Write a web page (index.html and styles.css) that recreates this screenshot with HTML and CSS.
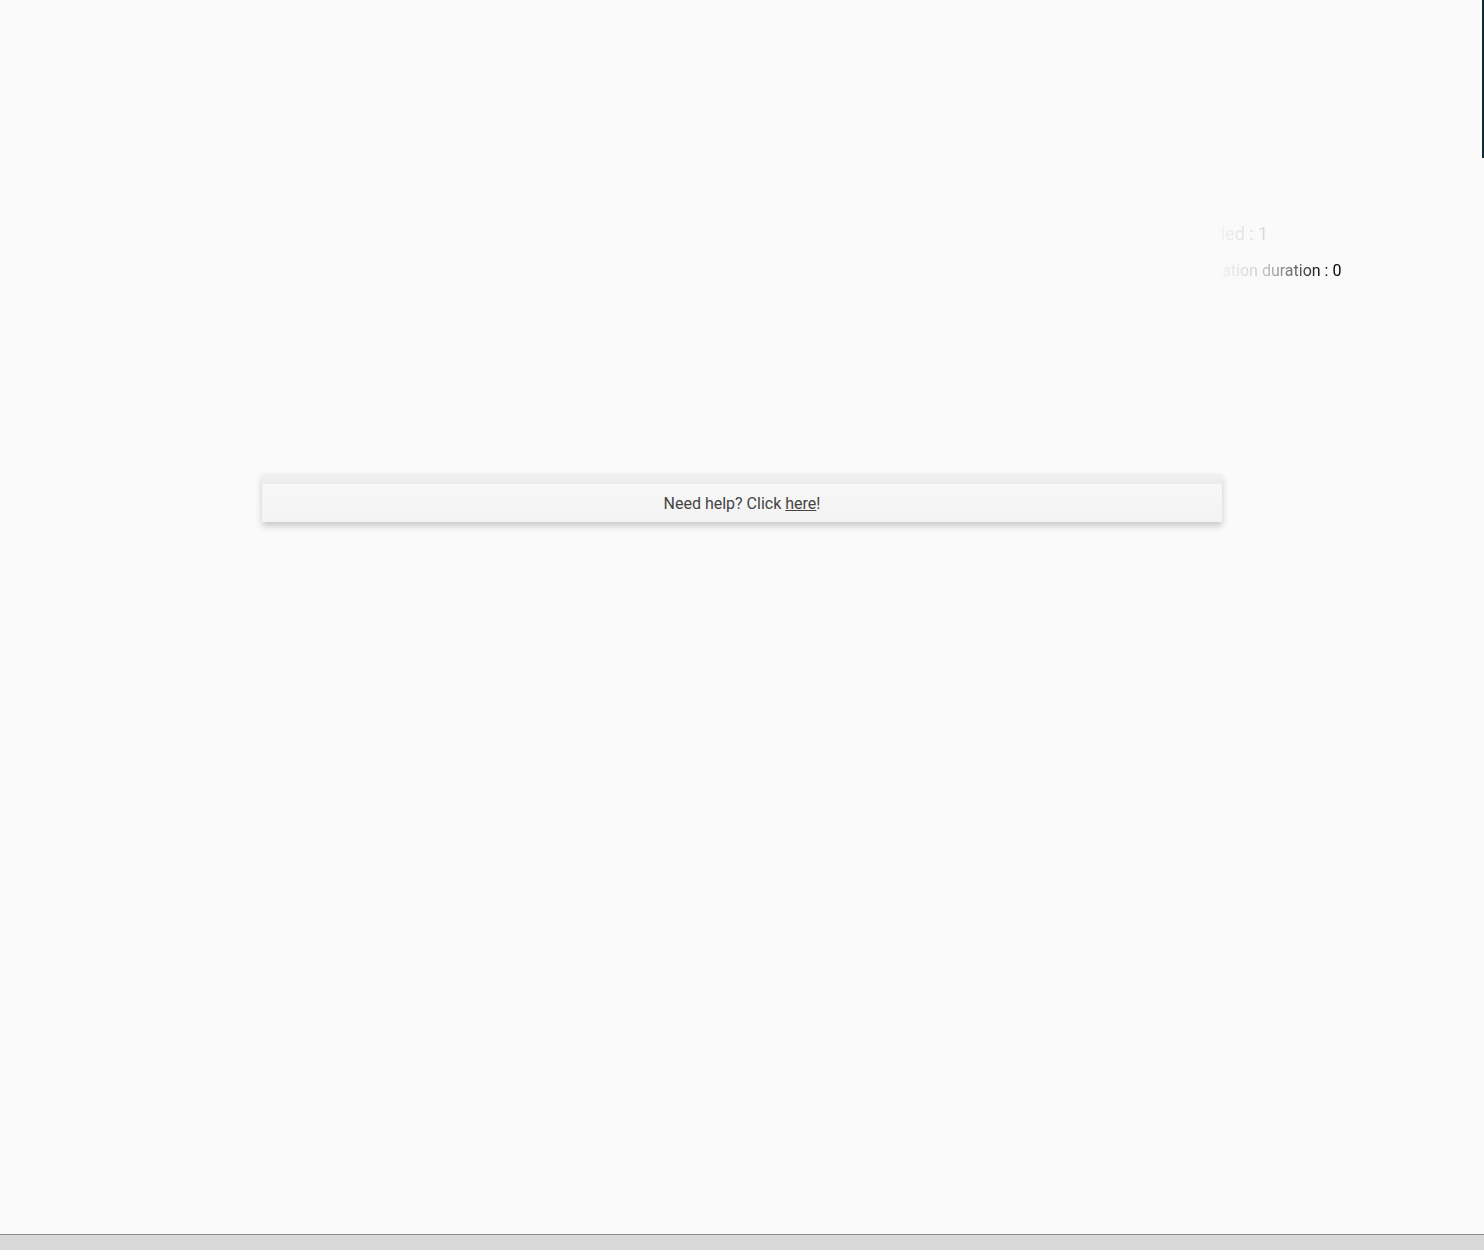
FILE: index.html
```html
<!DOCTYPE html>
<html lang="en">
<head>
<meta charset="utf-8">
<title>Simulation</title>
<link rel="stylesheet" href="styles.css">
</head>
<body>
  <div class="edge"></div>
  <main class="main">
    <section class="top">
      <div class="stats">
        <div class="stat stat-a">Handled : 1</div>
        <div class="stat stat-b">Simulation duration : 0</div>
      </div>
    </section>
    <section class="help">
      <div class="help-strip"></div>
      <div class="help-body">Need help? Click <a href="#" class="help-link">here</a>!</div>
    </section>
  </main>
  <footer class="statusbar"></footer>
</body>
</html>
```
FILE: styles.css
```css
html, body {
  margin: 0;
  padding: 0;
}
body {
  background: #fafafa;
  font-family: Roboto, "Liberation Sans", Arial, sans-serif;
  height: 100vh;
  display: flex;
  flex-direction: column;
  overflow: hidden;
  position: relative;
}
.edge {
  position: absolute;
  top: 0;
  right: 0;
  width: 2px;
  height: 158px;
  background: #0f2a30;
}
.main {
  flex: 1;
  display: flex;
  flex-direction: column;
}
.top {
  height: 474px;
  display: flex;
  justify-content: flex-end;
}
.stats {
  width: 302px;
  padding-top: 222px;
  display: flex;
  flex-direction: column;
  gap: 14px;
}
.stat {
  width: max-content;
  color: transparent;
  -webkit-background-clip: text;
  background-clip: text;
}
.stat-a {
  margin-left: -4px;
  font-size: 18px;
  line-height: 24px;
  background-image: linear-gradient(to right, #fafafa 0, #fafafa 40px, #eeeeee 44px, #e6e6e6 60px, #dcdcdc 80px, #d4d4d4 100%);
}
.stat-b {
  font-size: 16px;
  line-height: 22px;
  background-image: linear-gradient(to right, #fafafa 0, #fafafa 37px, #ebebeb 44px, #d4d4d4 72px, #b8b8b8 86px, #555 118px, #111 138px, #000 100%);
}
.help {
  width: 960px;
  margin: 0 auto;
  box-shadow: 0 4px 7px rgba(0, 0, 0, 0.2);
}
.help-strip {
  height: 10px;
  background: linear-gradient(to bottom, #f0f0f0, #ececec);
}
.help-body {
  height: 38px;
  display: flex;
  align-items: center;
  justify-content: center;
  background: linear-gradient(to bottom, #f7f7f7, #f3f3f3);
  color: #444;
  font-size: 16px;
  padding-top: 1px;
  box-sizing: border-box;
}
.help-link {
  color: #444;
  text-decoration: underline;
  margin-left: 4px;
}
.statusbar {
  height: 15px;
  border-top: 1px solid #8a8a8a;
  background: #d9d9d9;
}
```
